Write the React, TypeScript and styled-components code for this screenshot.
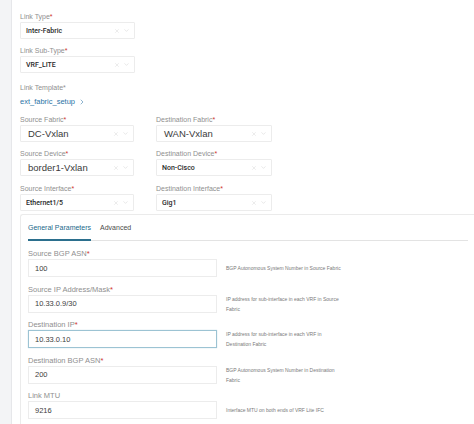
import React from "react";
import styled, { createGlobalStyle, css } from "styled-components";
import { X, ChevronDown, ChevronRight } from "lucide-react";

const Global = createGlobalStyle`
  body {
    margin: 0;
    background: #ffffff;
    font-family: "Liberation Sans", Arial, sans-serif;
  }
`;

const Page = styled.div`
  display: flex;
  width: 474px;
  height: 424px;
  overflow: hidden;
  background: #fff;
`;

const Rail = styled.div`
  width: 11px;
  flex-shrink: 0;
  background: #f3f4f6;
  border-right: 1px solid #e6e7ea;
`;

const Main = styled.div`
  flex: 1;
  padding: 12px 0 0 8px;
  display: flex;
  flex-direction: column;
`;

const Label = styled.div<{ $big?: boolean }>`
  font-size: ${({ $big }) => ($big ? "7.5px" : "7px")};
  line-height: 9px;
  color: #8f8f8f;
  margin-bottom: 1px;
  white-space: nowrap;

  span {
    color: #d0342c;
  }
`;

const Field = styled.div<{ $gap?: number }>`
  display: flex;
  flex-direction: column;
  margin-bottom: ${({ $gap }) => $gap ?? 7}px;
`;

const Row = styled.div`
  display: grid;
  grid-template-columns: 114px 116px;
  column-gap: 22px;
`;

const SelectBox = styled.div<{ $w?: number }>`
  box-sizing: border-box;
  width: ${({ $w }) => ($w ? `${$w}px` : "100%")};
  height: 17px;
  border: 1px solid #ececec;
  border-radius: 1px;
  display: flex;
  align-items: center;
  padding: 0 4px 0 5px;
  background: #fff;
`;

const SelectValue = styled.div<{ $large?: boolean }>`
  flex: 1;
  white-space: nowrap;
  ${({ $large }) =>
    $large
      ? css`
          font-size: 9.5px;
          padding-left: 2px;
          color: #3a3a3a;
        `
      : css`
          font-family: Roboto, "Liberation Sans", sans-serif;
          font-size: 7px;
          font-weight: 500;
          color: #2a2a2a;
        `}
`;

const Icons = styled.div`
  display: flex;
  align-items: center;
  gap: 3px;
  color: #c9c9c9;
`;

const TemplateLink = styled.a`
  display: flex;
  align-items: center;
  gap: 3px;
  margin-top: 3px;
  font-size: 7.5px;
  line-height: 11px;
  color: #2b74a6;
  text-decoration: none;
`;

const Panel = styled.div`
  margin-top: 3px;
  border-top: 1px solid #ebebeb;
  border-left: 1px solid #ebebeb;
  border-top-left-radius: 3px;
  padding: 0 6px 0 7px;
  flex: 1;
`;

const TabBar = styled.div`
  display: flex;
  gap: 9px;
  border-bottom: 1px solid #e3e3e3;
  height: 25px;
  align-items: flex-end;
`;

const Tab = styled.div<{ $active?: boolean }>`
  font-size: 7px;
  line-height: 11px;
  padding-bottom: 6px;
  margin-bottom: -1px;
  color: ${({ $active }) => ($active ? "#22688a" : "#4a4a4a")};
  border-bottom: 2px solid
    ${({ $active }) => ($active ? "#2b6f8d" : "transparent")};
`;

const Form = styled.div`
  padding-top: 8px;
  display: flex;
  flex-direction: column;
  gap: 7.5px;
`;

const ParamRow = styled.div`
  display: grid;
  grid-template-columns: 189px 116px;
  column-gap: 9px;
  align-items: end;
`;

const Input = styled.div<{ $focus?: boolean }>`
  box-sizing: border-box;
  height: 18px;
  border: 1px solid ${({ $focus }) => ($focus ? "#9cc3d3" : "#ececec")};
  box-shadow: ${({ $focus }) => ($focus ? "0 0 1px 0 #b9d6e2" : "none")};
  display: flex;
  align-items: center;
  padding-left: 6px;
  font-size: 7.5px;
  color: #3c3c3c;
`;

const Help = styled.div`
  height: 18px;
  display: flex;
  align-items: center;
  font-size: 5px;
  line-height: 10px;
  color: #7a7a7a;
`;

const Select = ({
  label,
  value,
  large,
}: {
  label: string;
  value: string;
  large?: boolean;
}) => (
  <div>
    <Label>
      {label}
      <span>*</span>
    </Label>
    <SelectBox>
      <SelectValue $large={large}>{value}</SelectValue>
      <Icons>
        <X size={6} strokeWidth={1.4} />
        <ChevronDown size={7} strokeWidth={1.4} />
      </Icons>
    </SelectBox>
  </div>
);

const params = [
  {
    label: "Source BGP ASN",
    req: true,
    value: "100",
    help: "BGP Autonomous System Number in Source Fabric",
  },
  {
    label: "Source IP Address/Mask",
    req: true,
    value: "10.33.0.9/30",
    help: "IP address for sub-interface in each VRF in Source Fabric",
  },
  {
    label: "Destination IP",
    req: true,
    value: "10.33.0.10",
    help: "IP address for sub-interface in each VRF in Destination Fabric",
    focus: true,
  },
  {
    label: "Destination BGP ASN",
    req: true,
    value: "200",
    help: "BGP Autonomous System Number in Destination Fabric",
  },
  {
    label: "Link MTU",
    req: false,
    value: "9216",
    help: "Interface MTU on both ends of VRF Lite IFC",
  },
];

export default function App() {
  return (
    <>
      <Global />
      <Page>
        <Rail />
        <Main>
          <Field>
            <Label>
              Link Type<span>*</span>
            </Label>
            <SelectBox $w={115}>
              <SelectValue>Inter-Fabric</SelectValue>
              <Icons>
                <X size={6} strokeWidth={1.4} />
                <ChevronDown size={7} strokeWidth={1.4} />
              </Icons>
            </SelectBox>
          </Field>
          <Field $gap={10}>
            <Label>
              Link Sub-Type<span>*</span>
            </Label>
            <SelectBox $w={115}>
              <SelectValue>VRF_LITE</SelectValue>
              <Icons>
                <X size={6} strokeWidth={1.4} />
                <ChevronDown size={7} strokeWidth={1.4} />
              </Icons>
            </SelectBox>
          </Field>
          <Field $gap={8}>
            <Label>Link Template*</Label>
            <TemplateLink>
              ext_fabric_setup
              <ChevronRight size={8} strokeWidth={1.6} />
            </TemplateLink>
          </Field>
          <Field>
            <Row>
              <Select label="Source Fabric" value="DC-Vxlan" large />
              <Select label="Destination Fabric" value="WAN-Vxlan" large />
            </Row>
          </Field>
          <Field $gap={8}>
            <Row>
              <Select label="Source Device" value="border1-Vxlan" large />
              <Select label="Destination Device" value="Non-Cisco" />
            </Row>
          </Field>
          <Field $gap={0}>
            <Row>
              <Select label="Source Interface" value="Ethernet1/5" />
              <Select label="Destination Interface" value="Gig1" />
            </Row>
          </Field>
          <Panel>
            <TabBar>
              <Tab $active>General Parameters</Tab>
              <Tab>Advanced</Tab>
            </TabBar>
            <Form>
              {params.map((p) => (
                <ParamRow key={p.label}>
                  <div>
                    <Label $big>
                      {p.label}
                      {p.req && <span>*</span>}
                    </Label>
                    <Input $focus={p.focus}>{p.value}</Input>
                  </div>
                  <Help>{p.help}</Help>
                </ParamRow>
              ))}
            </Form>
          </Panel>
        </Main>
      </Page>
    </>
  );
}
